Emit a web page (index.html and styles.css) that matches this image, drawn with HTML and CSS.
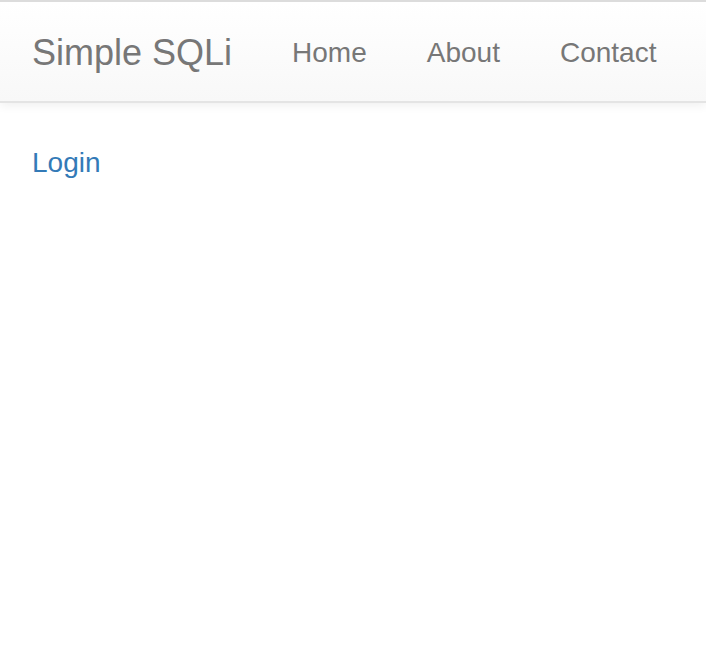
FILE: index.html
```html
<!DOCTYPE html>
<html>
<head>
<meta charset="utf-8">
<link rel="stylesheet" href="styles.css">
</head>
<body>
<nav class="navbar">
  <a class="brand" href="#">Simple SQLi</a>
  <ul class="nav">
    <li><a href="#">Home</a></li>
    <li><a href="#">About</a></li>
    <li><a href="#">Contact</a></li>
  </ul>
</nav>
<main class="content">
  <a class="login" href="#">Login</a>
</main>
</body>
</html>
```
FILE: styles.css
```css
html, body {
  margin: 0;
  padding: 0;
  background: #fff;
}
body {
  font-family: "Liberation Sans", Arial, sans-serif;
}
.navbar {
  display: flex;
  align-items: center;
  box-sizing: content-box;
  height: 96px;
  padding: 3px 0 0 32px;
  border-top: 2px solid #dcdcdc;
  border-bottom: 2px solid #e4e4e4;
  background: linear-gradient(to bottom, #ffffff 0%, #f8f8f8 100%);
  box-shadow: 0 2px 10px rgba(0,0,0,0.07);
  white-space: nowrap;
}
.brand {
  flex-shrink: 0;
  font-size: 36px;
  color: #777;
  text-decoration: none;
  margin-right: 30px;
  line-height: 1;
}
.nav {
  display: flex;
  list-style: none;
  margin: 0;
  padding: 0;
}
.nav a {
  display: block;
  padding: 0 30px;
  font-size: 28px;
  color: #777;
  text-decoration: none;
  line-height: 1;
}
.content {
  padding: 44px 32px;
}
.login {
  font-size: 28px;
  color: #337ab7;
  text-decoration: none;
}
```
